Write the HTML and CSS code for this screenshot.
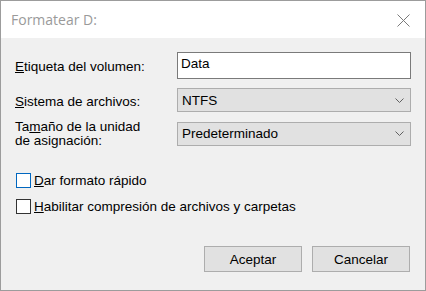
FILE: index.html
```html
<!DOCTYPE html>
<html lang="es">
<head>
    <meta charset="UTF-8">
    <title>Formatear D:</title>
    <link rel="stylesheet" href="styles.css">
</head>
<body>
    <div class="dialog">
        <div class="titlebar">
            <span class="title">Formatear D:</span>
            <svg class="close" width="13" height="13" viewBox="0 0 13 13">
                <path d="M0.5 0.5 L12.5 12.5 M12.5 0.5 L0.5 12.5" stroke="#7a7a7a" stroke-width="1" fill="none"/>
            </svg>
        </div>
        <div class="content">
            <div class="fields">
                <label class="field-label"><u>E</u>tiqueta del volumen:</label>
                <input type="text" class="textbox" value="Data">

                <label class="field-label"><u>S</u>istema de archivos:</label>
                <div class="combo">
                    <span>NTFS</span>
                    <svg class="chevron" width="9" height="5" viewBox="0 0 9 5">
                        <path d="M0.5 0.5 L4.5 4.5 L8.5 0.5" stroke="#606060" stroke-width="1" fill="none"/>
                    </svg>
                </div>

                <label class="field-label two-lines">Ta<u>m</u>año de la unidad<br>de asignación:</label>
                <div class="combo">
                    <span>Predeterminado</span>
                    <svg class="chevron" width="9" height="5" viewBox="0 0 9 5">
                        <path d="M0.5 0.5 L4.5 4.5 L8.5 0.5" stroke="#606060" stroke-width="1" fill="none"/>
                    </svg>
                </div>
            </div>

            <div class="options">
                <label class="option"><span class="check focused"></span><span><u>D</u>ar formato rápido</span></label>
                <label class="option"><span class="check"></span><span><u>H</u>abilitar compresión de archivos y carpetas</span></label>
            </div>

            <div class="actions">
                <button class="button">Aceptar</button>
                <button class="button">Cancelar</button>
            </div>
        </div>
    </div>
</body>
</html>
```

FILE: styles.css
```css
body {
    margin: 0;
    padding: 0;
    font-family: "Liberation Sans", Arial, sans-serif;
    font-size: 13.5px;
    color: #000;
    background-color: #f0f0f0;
}
.dialog {
    width: 426px;
    height: 291px;
    box-sizing: border-box;
    border: 1px solid #9c9c9c;
    background-color: #f0f0f0;
    display: flex;
    flex-direction: column;
}
.titlebar {
    height: 37px;
    background-color: #fff;
    display: flex;
    align-items: center;
    justify-content: space-between;
    padding: 0 15px 0 10px;
}
.title {
    font-family: "Open Sans", sans-serif;
    font-size: 14px;
    color: #9a9a9a;
    margin-top: -1px;
}
.close {
    margin-top: 1px;
}
.content {
    padding: 14px 14px 0 14px;
    display: flex;
    flex-direction: column;
}
.fields {
    display: grid;
    grid-template-columns: 162px 234px;
    grid-template-rows: 27px 24px 24px;
    row-gap: 9px;
    align-items: center;
}
.fields .combo:last-child {
    margin-top: 1px;
}
.field-label {
    line-height: 15px;
    padding-top: 2px;
}
.field-label.two-lines {
    padding-top: 1px;
    line-height: 14px;
}
.textbox {
    height: 27px;
    box-sizing: border-box;
    border: 1px solid #7a7a7a;
    background-color: #fff;
    font-family: inherit;
    font-size: 13.5px;
    padding: 0 3px 4px 3px;
    margin: 0;
    outline: none;
}
.combo {
    height: 24px;
    box-sizing: border-box;
    border: 1px solid #adadad;
    background-color: #e1e1e1;
    display: flex;
    align-items: center;
    justify-content: space-between;
    padding: 0 6px 0 4px;
}
.options {
    margin-top: 28px;
    display: flex;
    flex-direction: column;
    gap: 11px;
}
.option {
    display: flex;
    align-items: center;
    height: 15px;
    padding-left: 1px;
}
.check {
    width: 15px;
    height: 15px;
    box-sizing: border-box;
    border: 1px solid #333;
    background-color: #fff;
    margin-right: 3px;
}
.check.focused {
    border-color: #0067c0;
}
.actions {
    margin-top: 32px;
    display: flex;
    justify-content: flex-end;
    gap: 10px;
    padding-right: 1px;
}
.button {
    width: 98px;
    height: 26px;
    border: 1px solid #adadad;
    background-color: #e1e1e1;
    font-family: inherit;
    font-size: 13.5px;
    color: #000;
    padding: 0;
    margin: 0;
}
```
